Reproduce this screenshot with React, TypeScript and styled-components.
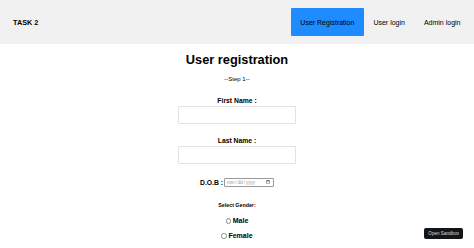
import React from "react";
import styled, { createGlobalStyle } from "styled-components";

const Global = createGlobalStyle`
  html, body { margin: 0; padding: 0; background: #fff; }
  body { font-family: "Liberation Sans", Arial, Helvetica, sans-serif; color: #000; }
`;

const Header = styled.header`
  height: 44px;
  background: #f1f1f1;
  display: flex;
  align-items: center;
  justify-content: space-between;
  padding: 0 4px 0 13px;
`;

const Brand = styled.div`
  font-size: 7.3px;
  font-weight: 700;
`;

const Nav = styled.nav`
  display: flex;
  align-items: center;
  height: 100%;
`;

const NavLink = styled.a<{ $active?: boolean }>`
  display: flex;
  align-items: center;
  height: 28px;
  padding: 0 9.5px;
  font-size: 7px;
  color: #000;
  text-decoration: none;
  background: ${(p) => (p.$active ? "#1e8bff" : "transparent")};
  border-radius: 1px;
`;

const Main = styled.main`
  display: flex;
  flex-direction: column;
  align-items: center;
`;

const Title = styled.h1`
  margin: 8px 0 0;
  font-size: 12.8px;
  line-height: 16px;
  font-weight: 700;
`;

const Step = styled.p`
  margin: 7px 0 0;
  font-size: 6px;
  line-height: 8px;
`;

const Label = styled.label<{ $top: number }>`
  margin-top: ${(p) => p.$top}px;
  font-size: 6.8px;
  line-height: 8px;
  font-weight: 700;
`;

const TextInput = styled.input`
  box-sizing: border-box;
  margin-top: 1px;
  width: 118px;
  height: 18px;
  border: 1px solid #e2e2e2;
  border-radius: 1px;
  outline: none;
`;

const DobRow = styled.div`
  margin-top: 14px;
  display: flex;
  align-items: center;
  gap: 1px;
  height: 9px;
  font-size: 6.8px;
  font-weight: 700;
`;

const DateInput = styled.input`
  box-sizing: border-box;
  width: 50px;
  height: 9px;
  padding: 0 1px;
  font-size: 4.5px;
  color: #999;
  border: 1px solid #999;
  border-radius: 1px;
  font-family: "Liberation Sans", Arial, sans-serif;
`;

const GenderTitle = styled.h5`
  margin: 14px 0 0;
  font-size: 5.3px;
  line-height: 8px;
  font-weight: 700;
`;

const RadioRow = styled.label<{ $top: number }>`
  margin-top: ${(p) => p.$top}px;
  display: flex;
  align-items: center;
  gap: 1.5px;
  height: 8px;
  line-height: 8px;
  font-size: 7px;
  font-weight: 700;
`;

const Radio = styled.input`
  appearance: none;
  box-sizing: border-box;
  margin: 0;
  width: 5.5px;
  height: 5.5px;
  border: 0.7px solid #8a8a8a;
  border-radius: 50%;
  background: #fff;
`;

const Sandbox = styled.button`
  position: fixed;
  right: 11px;
  top: 228px;
  height: 11px;
  padding: 0 4px;
  background: #151515;
  color: #ddd;
  border: none;
  border-radius: 2px;
  font-size: 4.6px;
  font-family: "Liberation Sans", Arial, sans-serif;
`;

export default function App() {
  return (
    <>
      <Global />
      <Header>
        <Brand>TASK 2</Brand>
        <Nav>
          <NavLink $active>User Registration</NavLink>
          <NavLink>User login</NavLink>
          <NavLink>Admin login</NavLink>
        </Nav>
      </Header>
      <Main>
        <Title>User registration</Title>
        <Step>--Step 1--</Step>
        <Label $top={14}>First Name :</Label>
        <TextInput type="text" />
        <Label $top={13}>Last Name :</Label>
        <TextInput type="text" />
        <DobRow>
          D.O.B :<DateInput type="date" />
        </DobRow>
        <GenderTitle>Select Gender:</GenderTitle>
        <RadioRow $top={8}>
          <Radio type="radio" name="g" />
          Male
        </RadioRow>
        <RadioRow $top={7}>
          <Radio type="radio" name="g" />
          Female
        </RadioRow>
      </Main>
      <Sandbox>Open Sandbox</Sandbox>
    </>
  );
}
